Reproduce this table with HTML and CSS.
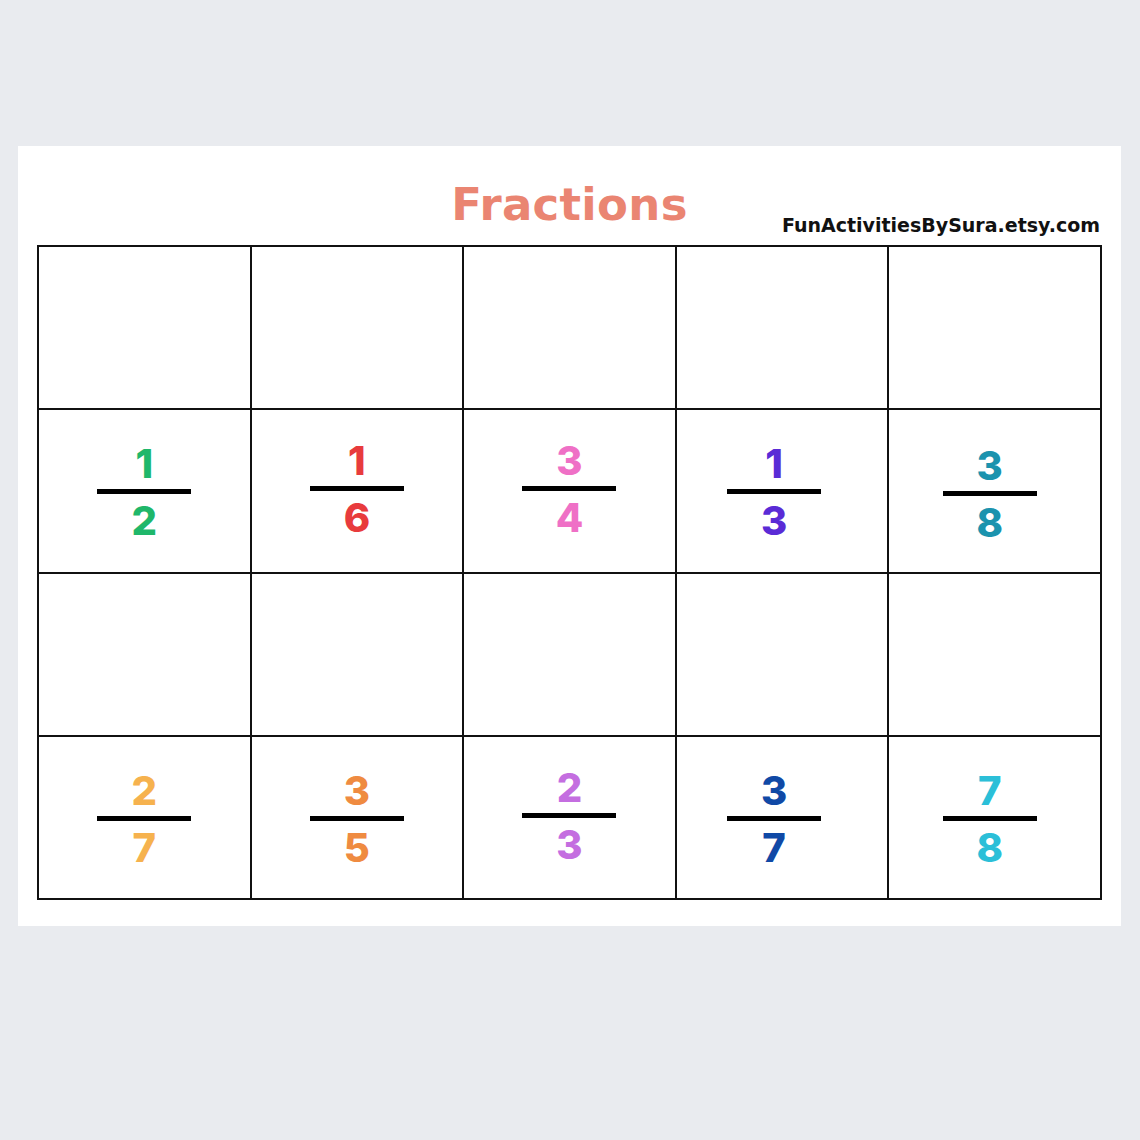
FILE: index.html
```html
<!DOCTYPE html>
<html lang="en">
<head>
<meta charset="utf-8">
<title>Fractions</title>
<link rel="stylesheet" href="styles.css">
</head>
<body>
<main class="page">
  <section class="sheet">
    <header class="sheet-head">
      <h1 class="title">Fractions</h1>
      <span class="shop">FunActivitiesBySura.etsy.com</span>
    </header>
    <div class="grid">
      <div class="cell"></div><div class="cell"></div><div class="cell"></div><div class="cell"></div><div class="cell"></div>

      <div class="cell"><div class="frac green"><span class="num">1</span><span class="bar"></span><span class="den">2</span></div></div>
      <div class="cell"><div class="frac red up"><span class="num">1</span><span class="bar"></span><span class="den">6</span></div></div>
      <div class="cell"><div class="frac pink up"><span class="num">3</span><span class="bar"></span><span class="den">4</span></div></div>
      <div class="cell col4"><div class="frac purple"><span class="num">1</span><span class="bar"></span><span class="den">3</span></div></div>
      <div class="cell col5"><div class="frac teal down"><span class="num">3</span><span class="bar"></span><span class="den">8</span></div></div>

      <div class="cell"></div><div class="cell"></div><div class="cell"></div><div class="cell"></div><div class="cell"></div>

      <div class="cell"><div class="frac amber"><span class="num">2</span><span class="bar"></span><span class="den">7</span></div></div>
      <div class="cell"><div class="frac orange"><span class="num">3</span><span class="bar"></span><span class="den">5</span></div></div>
      <div class="cell"><div class="frac lilac up"><span class="num">2</span><span class="bar"></span><span class="den">3</span></div></div>
      <div class="cell col4"><div class="frac blue"><span class="num">3</span><span class="bar"></span><span class="den">7</span></div></div>
      <div class="cell col5"><div class="frac cyan"><span class="num">7</span><span class="bar"></span><span class="den">8</span></div></div>
    </div>
  </section>
</main>
</body>
</html>
```
FILE: styles.css
```css
* { box-sizing: border-box; }

html, body {
  margin: 0;
  padding: 0;
  background: #e9ebef;
}

.page {
  width: 1140px;
  height: 1140px;
  padding-top: 146px;
  padding-left: 18px;
}

.sheet {
  width: 1103px;
  height: 780px;
  background: #ffffff;
  padding: 0 19px 0 19px;
}

.sheet-head {
  position: relative;
  height: 99px;
}

.title {
  margin: 0;
  padding-top: 33px;
  text-align: center;
  font-family: "DejaVu Sans", sans-serif;
  font-weight: bold;
  font-size: 45px;
  line-height: 52px;
  letter-spacing: 0.3px;
  color: #ea8572;
}

.shop {
  position: absolute;
  right: 2px;
  top: 68px;
  font-family: "DejaVu Sans", sans-serif;
  font-weight: bold;
  font-size: 19px;
  line-height: 22px;
  color: #111111;
}

.grid {
  display: grid;
  grid-template-columns: repeat(5, 1fr);
  grid-template-rows: repeat(4, 1fr);
  width: 1065px;
  height: 655px;
  border-top: 2px solid #111;
  border-left: 2px solid #111;
}

.cell {
  border-right: 2px solid #111;
  border-bottom: 2px solid #111;
  display: flex;
  align-items: center;
  justify-content: center;
}

.cell.col4 { padding-right: 16px; }
.cell.col5 { padding-right: 10px; }

.frac {
  display: flex;
  flex-direction: column;
  align-items: center;
  font-family: Inter, "Noto Sans", sans-serif;
  font-weight: 800;
  font-size: 40px;
  line-height: 40px;
  margin-top: 4px;
}

.frac.up { margin-top: -2px; }
.frac.down { margin-top: 8px; }

.num { display: block; }
.den { display: block; }

.bar {
  display: block;
  width: 94px;
  height: 5px;
  background: #000;
  margin: 5px 0 7px;
}

.green  { color: #1fb76a; }
.red    { color: #e83b3d; }
.pink   { color: #ef70c6; }
.purple { color: #5a2bd6; }
.teal   { color: #1b93ae; }
.amber  { color: #f6b24e; }
.orange { color: #ef8b41; }
.lilac  { color: #c46ee0; }
.blue   { color: #1049a6; }
.cyan   { color: #2bbfd8; }
```
